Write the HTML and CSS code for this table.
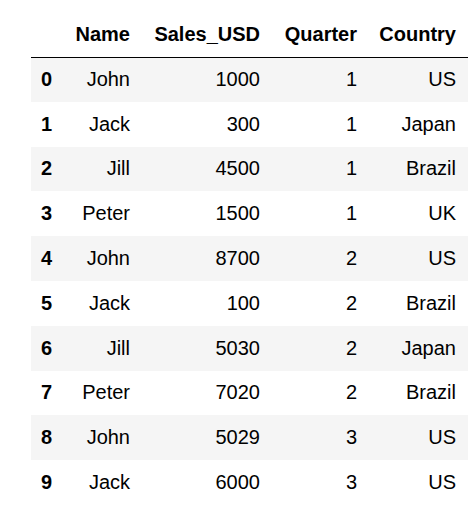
FILE: index.html
```html
<!DOCTYPE html>
<html>
<head>
<meta charset="utf-8">
<link rel="stylesheet" href="styles.css">
</head>
<body>
<table class="df">
  <colgroup>
    <col class="c-idx"><col class="c-name"><col class="c-sales"><col class="c-q"><col class="c-country">
  </colgroup>
  <thead>
    <tr><th></th><th>Name</th><th>Sales_USD</th><th>Quarter</th><th>Country</th></tr>
  </thead>
  <tbody>
    <tr><th>0</th><td>John</td><td>1000</td><td>1</td><td>US</td></tr>
    <tr><th>1</th><td>Jack</td><td>300</td><td>1</td><td>Japan</td></tr>
    <tr><th>2</th><td>Jill</td><td>4500</td><td>1</td><td>Brazil</td></tr>
    <tr><th>3</th><td>Peter</td><td>1500</td><td>1</td><td>UK</td></tr>
    <tr><th>4</th><td>John</td><td>8700</td><td>2</td><td>US</td></tr>
    <tr><th>5</th><td>Jack</td><td>100</td><td>2</td><td>Brazil</td></tr>
    <tr><th>6</th><td>Jill</td><td>5030</td><td>2</td><td>Japan</td></tr>
    <tr><th>7</th><td>Peter</td><td>7020</td><td>2</td><td>Brazil</td></tr>
    <tr><th>8</th><td>John</td><td>5029</td><td>3</td><td>US</td></tr>
    <tr><th>9</th><td>Jack</td><td>6000</td><td>3</td><td>US</td></tr>
  </tbody>
</table>
</body>
</html>
```
FILE: styles.css
```css
html, body {
  margin: 0;
  padding: 0;
  background: #ffffff;
}
body {
  font-family: "Liberation Sans", Arial, sans-serif;
  font-size: 20px;
  color: #000000;
}
.df {
  margin: 12px 0 0 31px;
  width: 437px;
  table-layout: fixed;
  border-collapse: collapse;
  border-spacing: 0;
}
.c-idx { width: 32px; }
.c-name { width: 77px; }
.c-sales { width: 130px; }
.c-q { width: 97px; }
.c-country { width: 101px; }
.df th, .df td {
  height: 44.8px;
  padding: 0 10px 0 0;
  text-align: right;
  vertical-align: middle;
  white-space: nowrap;
  box-sizing: border-box;
}
.df th { font-weight: bold; }
.df td:last-child, .df thead th:last-child { padding-right: 12px; }
.df thead tr { border-bottom: 1px solid #000000; }
.df thead th { height: 45px; }
.df tbody th { text-align: left; padding-left: 10px; }
.df tbody tr:nth-child(odd) { background: #f5f5f5; }
```
